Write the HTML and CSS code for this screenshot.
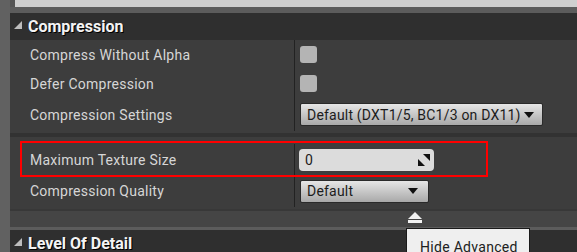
FILE: index.html
```html
<!DOCTYPE html>
<html lang="en">
<head>
  <meta charset="UTF-8">
  <title>Details - Compression</title>
  <link rel="stylesheet" href="styles.css">
</head>
<body>

  <div class="panel">
    <div class="search-row">
      <div class="search"><span>Search</span></div>
    </div>
    <div class="spacer"></div>

    <div class="category">
      <svg class="expander" width="10" height="10" viewBox="0 0 10 10"><polygon points="9,1 9,9 1,9" fill="#bdbdbd"/></svg>
      Compression
    </div>

    <div class="group first">
      <div class="row r1">
        <div class="name">Compress Without Alpha</div>
        <div class="value"><span class="check"></span></div>
      </div>
      <div class="row r2">
        <div class="name">Defer Compression</div>
        <div class="value"><span class="check"></span></div>
      </div>
      <div class="row r3">
        <div class="name">Compression Settings</div>
        <div class="value">
          <div class="combo wide">Default (DXT1/5, BC1/3 on DX11)<span class="caret"></span></div>
        </div>
      </div>
    </div>

    <div class="group-sep"></div>

    <div class="group second">
      <div class="row r4 marked">
        <div class="name">Maximum Texture Size</div>
        <div class="value">
          <div class="numbox">
            <span>0</span>
            <svg width="12" height="12" viewBox="0 0 12 12">
              <polygon points="5,0 12,0 12,7" fill="#111"/>
              <polygon points="0,5 0,12 7,12" fill="#111"/>
            </svg>
          </div>
        </div>
      </div>
      <div class="row r5">
        <div class="name">Compression Quality</div>
        <div class="value">
          <div class="combo short">Default<span class="caret"></span></div>
        </div>
      </div>
    </div>

    <div class="advanced-top"></div>
    <div class="advanced">
      <svg width="14" height="11" viewBox="0 0 14 11">
        <polygon points="0,7 7,0 14,7" fill="#f2f2f2"/>
        <rect x="0" y="8" width="14" height="3" fill="#f2f2f2"/>
      </svg>
    </div>
    <div class="advanced-bottom"></div>

    <div class="category">
      <svg class="expander" width="10" height="10" viewBox="0 0 10 10"><polygon points="9,1 9,9 1,9" fill="#bdbdbd"/></svg>
      Level Of Detail
    </div>
  </div>

  <div class="tooltip">Hide Advanced</div>

</body>
</html>
```

FILE: styles.css
```css
body {
  margin: 0;
  width: 577px;
  height: 252px;
  overflow: hidden;
  background: #616161;
  font-family: Roboto, "Liberation Sans", sans-serif;
  position: relative;
}

.panel {
  margin-left: 10px;
}

.search-row {
  height: 7px;
  background: #555;
  padding-left: 5px;
}

.search {
  height: 7px;
  background: #cfcfcf;
  overflow: hidden;
}

.search span {
  display: block;
  margin-top: -12px;
  padding-left: 8px;
  font-size: 13px;
  line-height: 16px;
  color: #8a8a8a;
}

.spacer {
  height: 6px;
  background: #5c5c5c;
}

.category {
  height: 27px;
  background: #2f2f2f;
  display: flex;
  align-items: center;
  padding-left: 3px;
  color: #f4f4f4;
  font-size: 16px;
  font-weight: bold;
  text-shadow: 1px 1px 0 #000;
}

.expander {
  margin-right: 5px;
  margin-top: -3px;
}

.group {
  background: #3d3d3d;
}

.group.first {
  padding-bottom: 2px;
}

.group.second {
  padding-top: 7px;
  padding-bottom: 2px;
}

.group-sep {
  height: 4px;
  background: #323232;
}

.row {
  display: flex;
}

.r1, .r2 { height: 29px; }
.r3 { height: 33px; }
.r4 { height: 31px; }
.r5 { height: 32px; }

.name {
  width: 264px;
  padding-left: 20px;
  display: flex;
  align-items: center;
  font-size: 14px;
  letter-spacing: 0.25px;
  color: #d6d6d6;
}

.value {
  flex: 1;
  border-left: 1px solid #222;
  padding-left: 5px;
  display: flex;
  align-items: center;
}

.check {
  width: 17px;
  height: 17px;
  border-radius: 3px;
  background: #b4b4b4;
}

.combo {
  height: 23px;
  box-sizing: border-box;
  border: 1px solid #2a2a2a;
  border-radius: 2px;
  background: linear-gradient(#e6e6e6, #c4c4c4 55%, #a9a9a9);
  color: #1c1c1c;
  font-size: 14px;
  letter-spacing: 0.2px;
  display: flex;
  align-items: center;
  padding-left: 6px;
}

.combo.wide {
  width: 243px;
}

.combo.short {
  width: 129px;
  justify-content: space-between;
  padding-right: 10px;
}

.caret {
  width: 0;
  height: 0;
  margin-left: 3px;
  border-left: 5px solid transparent;
  border-right: 5px solid transparent;
  border-top: 6px solid #111;
}

.numbox {
  width: 135px;
  height: 22px;
  margin-left: -1px;
  box-sizing: border-box;
  border-radius: 4px;
  background: #dcdcdc;
  display: flex;
  align-items: center;
  justify-content: space-between;
  padding: 0 4px 0 6px;
  font-size: 14px;
  color: #1c1c1c;
}

.marked {
  position: relative;
}

.marked::after {
  content: "";
  position: absolute;
  left: 10px;
  top: -3px;
  width: 464px;
  height: 32px;
  border: 2px solid #f00;
}

.advanced-top {
  height: 2px;
  background: #383838;
}

.advanced {
  height: 16px;
  background: #454545;
  display: flex;
  align-items: flex-end;
  padding-left: 398px;
}

.advanced svg {
  margin-bottom: 4px;
}

.advanced-bottom {
  height: 3px;
  background: #5c5c5c;
}

.tooltip {
  position: absolute;
  left: 406px;
  top: 228px;
  width: 124px;
  height: 34px;
  box-sizing: border-box;
  border: 1px solid #1a1a1a;
  background: #efefef;
  color: #202020;
  font-size: 14px;
  padding: 10px 0 0 13px;
  letter-spacing: 0.3px;
}
```
